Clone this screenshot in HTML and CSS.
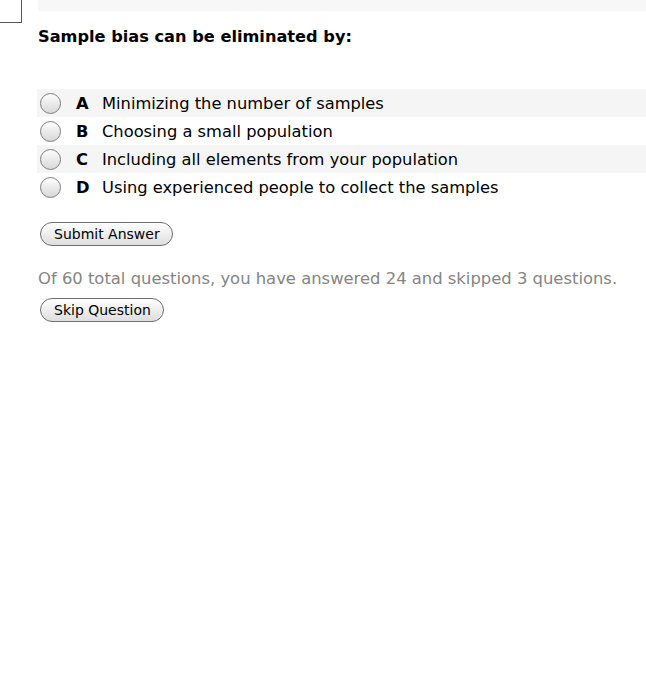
FILE: index.html
```html
<!DOCTYPE html>
<html lang="en">
<head>
  <meta charset="UTF-8">
  <title>Question</title>
  <link rel="stylesheet" href="styles.css">
</head>
<body>
  <div class="topo">
    <div class="caixa"></div>
    <div class="faixa"></div>
  </div>

  <div class="pergunta">
    <h2 class="titulo">Sample bias can be eliminated by:</h2>

    <ul class="opcoes">
      <li class="opcao"><span class="radio"></span><b>A</b><span>Minimizing the number of samples</span></li>
      <li class="opcao"><span class="radio"></span><b>B</b><span>Choosing a small population</span></li>
      <li class="opcao"><span class="radio"></span><b>C</b><span>Including all elements from your population</span></li>
      <li class="opcao"><span class="radio"></span><b>D</b><span>Using experienced people to collect the samples</span></li>
    </ul>

    <button class="botao">Submit Answer</button>

    <p class="status">Of 60 total questions, you have answered 24 and skipped 3 questions.</p>

    <button class="botao">Skip Question</button>
  </div>
</body>
</html>
```

FILE: styles.css
```css
body {
  margin: 0;
  padding: 0;
  font-family: "DejaVu Sans", Verdana, sans-serif;
  background: #fff;
  color: #000;
}

.topo {
  display: flex;
  align-items: flex-start;
  gap: 16px;
}

.caixa {
  width: 21px;
  height: 22px;
  border-right: 1px solid #555;
  border-bottom: 1px solid #555;
}

.faixa {
  flex: 1;
  height: 11px;
  background: #f7f7f7;
}

.pergunta {
  padding-left: 38px;
}

.titulo {
  font-size: 16.2px;
  font-weight: bold;
  margin: 4px 0 43px 0;
}

.opcoes {
  list-style: none;
  margin: 0 0 21px -1px;
  padding: 0;
}

.opcao {
  display: flex;
  align-items: center;
  height: 28px;
  font-size: 16.3px;
}

.opcao:nth-child(odd) {
  background: #f5f5f5;
}

.radio {
  width: 19px;
  height: 19px;
  border: 1px solid #7d7d7d;
  border-radius: 50%;
  background: linear-gradient(to bottom, #fdfdfd, #d8d8d8);
  margin-left: 3px;
  margin-right: 15px;
  box-sizing: content-box;
}

.opcao b {
  width: 26px;
}

.botao {
  display: block;
  font-family: "DejaVu Sans", Verdana, sans-serif;
  font-size: 14px;
  color: #000;
  height: 24px;
  padding: 0 12px 0 13px;
  margin-left: 2px;
  border: 1px solid #6e6e6e;
  border-radius: 12px;
  background: linear-gradient(to bottom, #ffffff, #dedede);
}

.status {
  font-size: 16.4px;
  color: #858585;
  margin: 23px 0 10px 0;
}
```
